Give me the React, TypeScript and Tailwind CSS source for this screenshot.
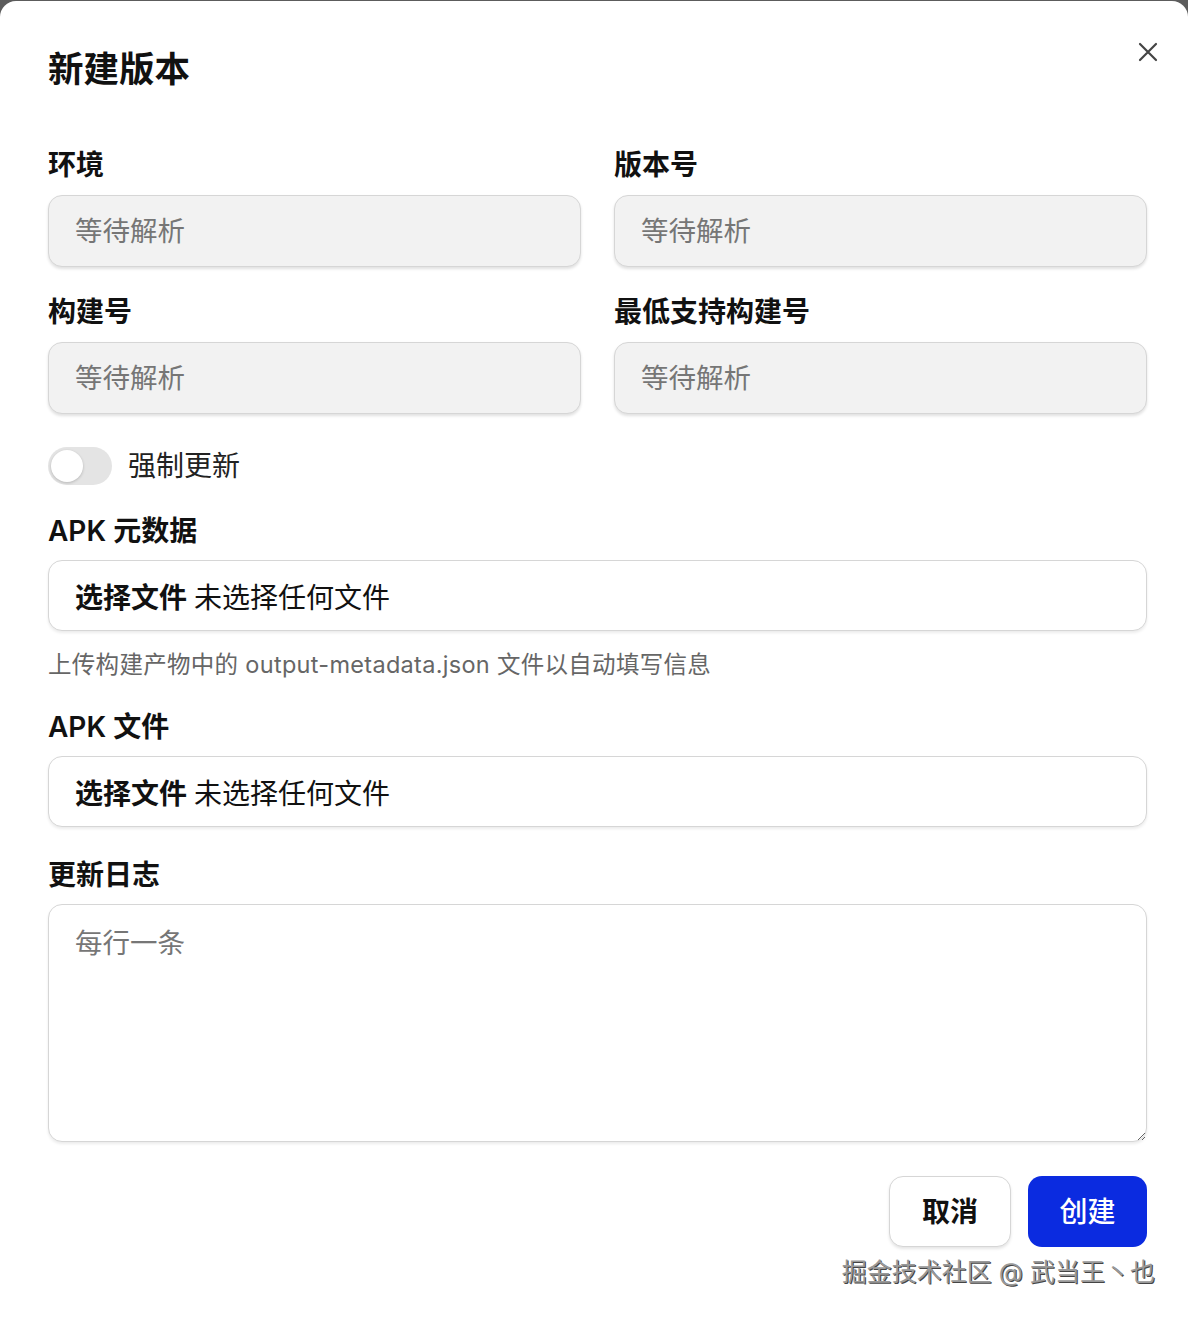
import React from 'react'

const font = { fontFamily: 'Inter, "Noto Sans CJK SC", sans-serif' }

const Label = ({ children }: { children: React.ReactNode }) => (
  <div className="h-[36px] leading-[36px] text-[28px] font-semibold text-[#111]">{children}</div>
)

const ReadonlyField = ({ label }: { label: string }) => (
  <div className="flex flex-col">
    <Label>{label}</Label>
    <div className="mt-[12px] h-[72px] rounded-[14px] border border-[#d6d6d6] bg-[#f2f2f2] shadow-[0_2px_3px_rgba(0,0,0,0.12)] flex items-center px-[26px] pt-[2px] text-[27.5px] text-[#767676]">
      等待解析
    </div>
  </div>
)

const FileField = () => (
  <div className="h-[71px] rounded-[14px] border border-[#d6d6d6] bg-white shadow-[0_2px_3px_rgba(0,0,0,0.08)] flex items-center px-[26px] pt-[4px] text-[28px] text-[#111]">
    <span className="font-semibold">选择文件</span>
    <span className="ml-[7px]">未选择任何文件</span>
  </div>
)

const App = () => {
  return (
    <div className="h-[1320px] bg-[#5c5c5c] pt-px" style={font}>
      <div className="relative h-full bg-white rounded-t-[16px] pl-[48px] pr-[41px] pt-[47px] flex flex-col">
        <button type="button" className="absolute top-[41px] right-[30px] w-[20px] h-[20px] text-[#444]">
          <svg viewBox="0 0 20 20" width="20" height="20" fill="none" stroke="currentColor" strokeWidth="2.2" strokeLinecap="round">
            <path d="M2 2 L18 18 M18 2 L2 18" />
          </svg>
        </button>

        <h2 className="h-[44px] leading-[44px] text-[35.5px] font-bold text-[#111]">新建版本</h2>

        <div className="mt-[55px] grid grid-cols-2 gap-x-[33px] gap-y-[27px]">
          <ReadonlyField label="环境" />
          <ReadonlyField label="版本号" />
          <ReadonlyField label="构建号" />
          <ReadonlyField label="最低支持构建号" />
        </div>

        <div className="mt-[31px] flex items-center gap-[16px]">
          <div className="relative w-[64px] h-[38px] rounded-full bg-[#e4e4e4]">
            <div className="absolute left-[3px] top-[3px] w-[32px] h-[32px] rounded-full bg-white shadow-[0_1px_3px_rgba(0,0,0,0.2)]" />
          </div>
          <span className="text-[28px] text-[#222]">强制更新</span>
        </div>

        <div className="mt-[26px]">
          <Label>APK 元数据</Label>
        </div>
        <div className="mt-[11px]">
          <FileField />
        </div>
        <p className="mt-[19px] h-[30px] leading-[30px] text-[23.5px] text-[#666] tracking-[0.3px]">
          上传构建产物中的 output-metadata.json 文件以自动填写信息
        </p>

        <div className="mt-[29px]">
          <Label>APK 文件</Label>
        </div>
        <div className="mt-[11px]">
          <FileField />
        </div>

        <div className="mt-[30px]">
          <Label>更新日志</Label>
        </div>
        <textarea
          placeholder="每行一条"
          className="mt-[11px] h-[238px] resize-y rounded-[14px] border border-[#d6d6d6] bg-white shadow-[0_2px_3px_rgba(0,0,0,0.08)] px-[26px] py-[18px] text-[27.5px] text-[#111] placeholder:text-[#767676] outline-none"
        />

        <div className="mt-[34px] flex justify-end gap-[17px]">
          <button type="button" className="w-[122px] h-[71px] rounded-[14px] border border-[#d6d6d6] bg-white shadow-[0_2px_3px_rgba(0,0,0,0.1)] text-[28px] font-semibold text-[#111]">
            取消
          </button>
          <button type="button" className="w-[119px] h-[71px] rounded-[14px] bg-[#0b2be0] text-[28px] font-medium text-white">
            创建
          </button>
        </div>

        <div className="mt-[10px] self-end mr-[-8px] text-[25px] text-[#999] leading-[30px] [text-shadow:1px_1px_0_#444]">
          掘金技术社区 @ 武当王丶也
        </div>
      </div>
    </div>
  )
}

export default App
